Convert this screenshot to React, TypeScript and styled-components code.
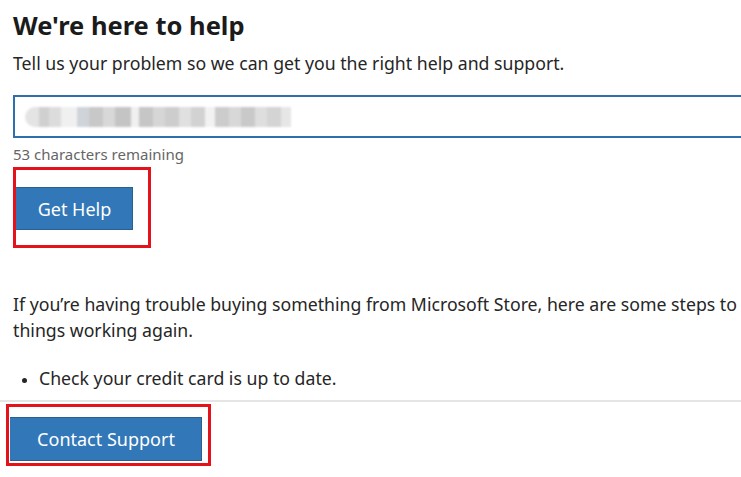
import styled, {createGlobalStyle} from "styled-components";


const GlobalStyle = createGlobalStyle`
    html, body {
        margin: 0;
        padding: 0;
        background: #ffffff;
    }
    body {
        font-family: "Noto Sans", "Open Sans", sans-serif;
        color: #262626;
    }
`

const blurBlocks = [
    {w: 14, c: "#e4e4e4"}, {w: 10, c: "#d0d0d0"}, {w: 12, c: "#dcdcdc"}, {w: 16, c: "#f0f0f0"},
    {w: 12, c: "#cfd4da"}, {w: 14, c: "#c8c8c8"}, {w: 12, c: "#d8d8d8"}, {w: 16, c: "#c4c4c4"},
    {w: 8, c: "#f0f0f0"}, {w: 14, c: "#c6c6c6"}, {w: 12, c: "#d6d6d6"}, {w: 14, c: "#cdcdcd"},
    {w: 12, c: "#e0e0e0"}, {w: 14, c: "#d2d2d2"}, {w: 10, c: "#f2f2f2"}, {w: 14, c: "#cccccc"},
    {w: 12, c: "#d8d8d8"}, {w: 14, c: "#c9c9c9"}, {w: 12, c: "#dedede"}, {w: 14, c: "#d4d4d4"},
    {w: 10, c: "#e6e6e6"},
]


function App(){
    return(
        <>
            <GlobalStyle/>
            <Page>
                <Main>
                    <Title>We're here to help</Title>
                    <Subtitle>Tell us your problem so we can get you the right help and support.</Subtitle>
                    <InputBox>
                        <Blurred>
                            {blurBlocks.map((b, i) => (
                                <BlurBlock key={i} $w={b.w} $c={b.c}/>
                            ))}
                        </Blurred>
                    </InputBox>
                    <Counter>53 characters remaining</Counter>
                    <Highlight $pad="17px 15px 15px 0">
                        <Button $w={117} $h={43}>Get Help</Button>
                    </Highlight>
                    <Paragraph>
                        If you’re having trouble buying something from Microsoft Store, here are some steps to<br/>
                        things working again.
                    </Paragraph>
                    <List>
                        <li>Check your credit card is up to date.</li>
                    </List>
                </Main>
                <Footer>
                    <Highlight $pad="10px 6px 2px 1px">
                        <Button $w={192} $h={44}>Contact Support</Button>
                    </Highlight>
                </Footer>
            </Page>
        </>
    )
}

const Page = styled.div`
    width: 741px;
    overflow: hidden;
`

const Main = styled.div`
    padding: 6px 0 0 13px;
`

const Title = styled.h1`
    margin: 0;
    font-size: 25.5px;
    line-height: 38px;
    font-weight: 700;
    color: #1b1b1b;
    white-space: nowrap;
`

const Subtitle = styled.p`
    margin: 6px 0 0;
    font-size: 17.7px;
    line-height: 26px;
    white-space: nowrap;
`

const InputBox = styled.div`
    box-sizing: border-box;
    margin-top: 19px;
    height: 43px;
    width: 787px;
    border: 2px solid #2e6fae;
    display: flex;
    align-items: center;
    padding-left: 10px;
`

const Blurred = styled.div`
    display: flex;
    height: 20px;
    filter: blur(1px);
    border-radius: 10px 0 0 10px;
    overflow: hidden;
`

const BlurBlock = styled.span<{$w: number; $c: string}>`
    width: ${p => p.$w}px;
    background: ${p => p.$c};
`

const Counter = styled.div`
    margin: 6px 0 3px;
    font-size: 15px;
    line-height: 20px;
    color: #666666;
`

const Highlight = styled.div<{$pad: string}>`
    width: fit-content;
    border: 3px solid #e3121b;
    padding: ${p => p.$pad};
`

const Button = styled.button<{$w: number; $h: number}>`
    display: block;
    box-sizing: border-box;
    width: ${p => p.$w}px;
    height: ${p => p.$h}px;
    padding: 0;
    background: #3277b8;
    color: #ffffff;
    border: 1px solid #2a5f91;
    border-left-color: #3277b8;
    font-family: "Noto Sans", "Open Sans", sans-serif;
    font-size: 18px;
`

const Paragraph = styled.p`
    margin: 43px 0 0;
    font-size: 17.7px;
    line-height: 26px;
    white-space: nowrap;
`

const List = styled.ul`
    margin: 22px 0 0;
    padding-left: 26px;
    font-size: 17.7px;
    line-height: 26px;
    li::marker{
        font-size: 15px;
    }
`

const Footer = styled.div`
    margin-top: 9px;
    border-top: 2px solid #e5e5e5;
    padding: 2px 0 0 6px;
`

export default App;
